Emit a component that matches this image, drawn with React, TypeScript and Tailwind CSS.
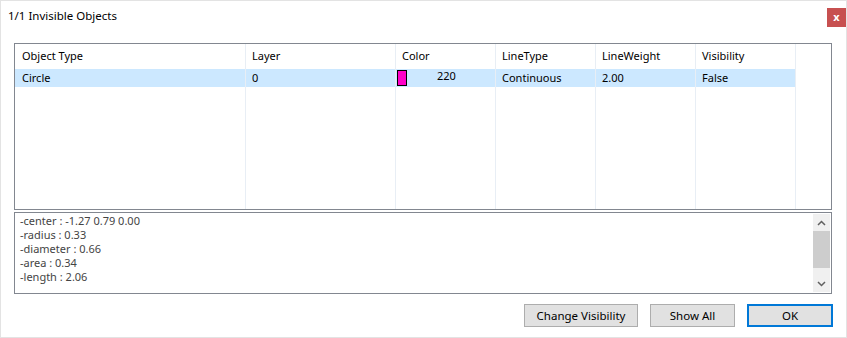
import { ReactNode } from 'react'

interface Row {
  type: string
  layer: string
  color: string
  lineType: string
  lineWeight: string
  visibility: string
}

const rows: Row[] = [
  { type: 'Circle', layer: '0', color: '220', lineType: 'Continuous', lineWeight: '2.00', visibility: 'False' },
]

const columns = [
  { title: 'Object Type', w: 'w-[231px]' },
  { title: 'Layer', w: 'w-[150px]' },
  { title: 'Color', w: 'w-[100px]' },
  { title: 'LineType', w: 'w-[100px]' },
  { title: 'LineWeight', w: 'w-[100px]' },
  { title: 'Visibility', w: 'w-[100px]' },
]

const details = [
  '-center : -1.27 0.79 0.00',
  '-radius : 0.33',
  '-diameter : 0.66',
  '-area : 0.34',
  '-length : 2.06',
]

function Cell({ w, children, first }: { w: string; children?: ReactNode; first?: boolean }) {
  return (
    <div className={`${w} shrink-0 h-full flex items-center border-r border-[#e8eef5] ${first ? 'pl-[7px]' : 'pl-[6px]'}`}>
      {children}
    </div>
  )
}

function Button({ label, primary, w }: { label: string; primary?: boolean; w: string }) {
  return (
    <button
      className={`${w} h-[23px] bg-[#e1e1e1] text-[11.5px] text-black flex items-center justify-center ${
        primary ? 'border-2 border-[#0078d7]' : 'border border-[#adadad]'
      }`}
    >
      {label}
    </button>
  )
}

export default function App() {
  return (
    <div
      className="w-[847px] h-[338px] bg-white border border-[#e3e3e3] flex flex-col text-[#1a1a1a]"
      style={{ fontFamily: '"Segoe UI", "Noto Sans", "Open Sans", sans-serif' }}
    >
      <div className="h-[42px] flex items-start justify-between">
        <div className="pl-[7px] pt-[6px] text-[11.5px] text-black">1/1 Invisible Objects</div>
        <div className="mt-[7px] w-[19px] h-[19px] bg-[#c75050] text-white text-[11px] font-bold flex items-center justify-center leading-none pb-[2px]">
          x
        </div>
      </div>

      {/* object list */}
      <div className="ml-[13px] w-[818px] h-[167px] border border-[#828790] flex flex-col text-[11px] text-black">
        <div className="h-[25px] flex">
          {columns.map((c, i) => (
            <Cell key={c.title} w={c.w} first={i === 0}>
              {c.title}
            </Cell>
          ))}
        </div>
        <div className="flex-1 flex flex-col">
          {rows.map((r) => (
            <div key={r.type} className="h-[18px] flex">
              <div className="flex bg-[#cce8ff] h-full">
                <Cell w="w-[231px]" first>{r.type}</Cell>
                <Cell w="w-[150px]">{r.layer}</Cell>
                <div className="w-[100px] shrink-0 h-full flex items-center border-r border-[#e8eef5] pl-[1px]">
                  <span className="w-[10px] h-[16px] bg-[#ff00c8] border border-black" />
                  <span className="ml-[30px] -mt-[3px]">{r.color}</span>
                </div>
                <Cell w="w-[100px]">{r.lineType}</Cell>
                <Cell w="w-[100px]">{r.lineWeight}</Cell>
                <Cell w="w-[100px]">{r.visibility}</Cell>
              </div>
            </div>
          ))}
          <div className="flex-1 flex">
            {columns.map((c) => (
              <div key={c.title} className={`${c.w} shrink-0 border-r border-[#e8eef5]`} />
            ))}
          </div>
        </div>
      </div>

      {/* properties */}
      <div className="mt-[2px] ml-[13px] w-[818px] h-[82px] border border-[#828790] flex">
        <div className="flex-1 pl-[5px] pt-[1px] text-[11px] leading-[14px] text-[#444]">
          {details.map((d) => (
            <div key={d}>{d}</div>
          ))}
        </div>
        <div className="w-[17px] bg-[#f0f0f0] flex flex-col my-[1px] mr-[1px]">
          <div className="h-[17px] flex items-center justify-center">
            <svg width="9" height="6" viewBox="0 0 9 6">
              <path d="M1 5 L4.5 1.5 L8 5" fill="none" stroke="#606060" strokeWidth="1.5" />
            </svg>
          </div>
          <div className="h-[37px] bg-[#cdcdcd]" />
          <div className="flex-1" />
          <div className="h-[17px] flex items-center justify-center">
            <svg width="9" height="6" viewBox="0 0 9 6">
              <path d="M1 1 L4.5 4.5 L8 1" fill="none" stroke="#606060" strokeWidth="1.5" />
            </svg>
          </div>
        </div>
      </div>

      <div className="mt-[10px] flex justify-end gap-[12px] pr-[13px]">
        <Button label="Change Visibility" w="w-[114px]" />
        <Button label="Show All" w="w-[85px]" />
        <Button label="OK" w="w-[86px]" primary />
      </div>
    </div>
  )
}
